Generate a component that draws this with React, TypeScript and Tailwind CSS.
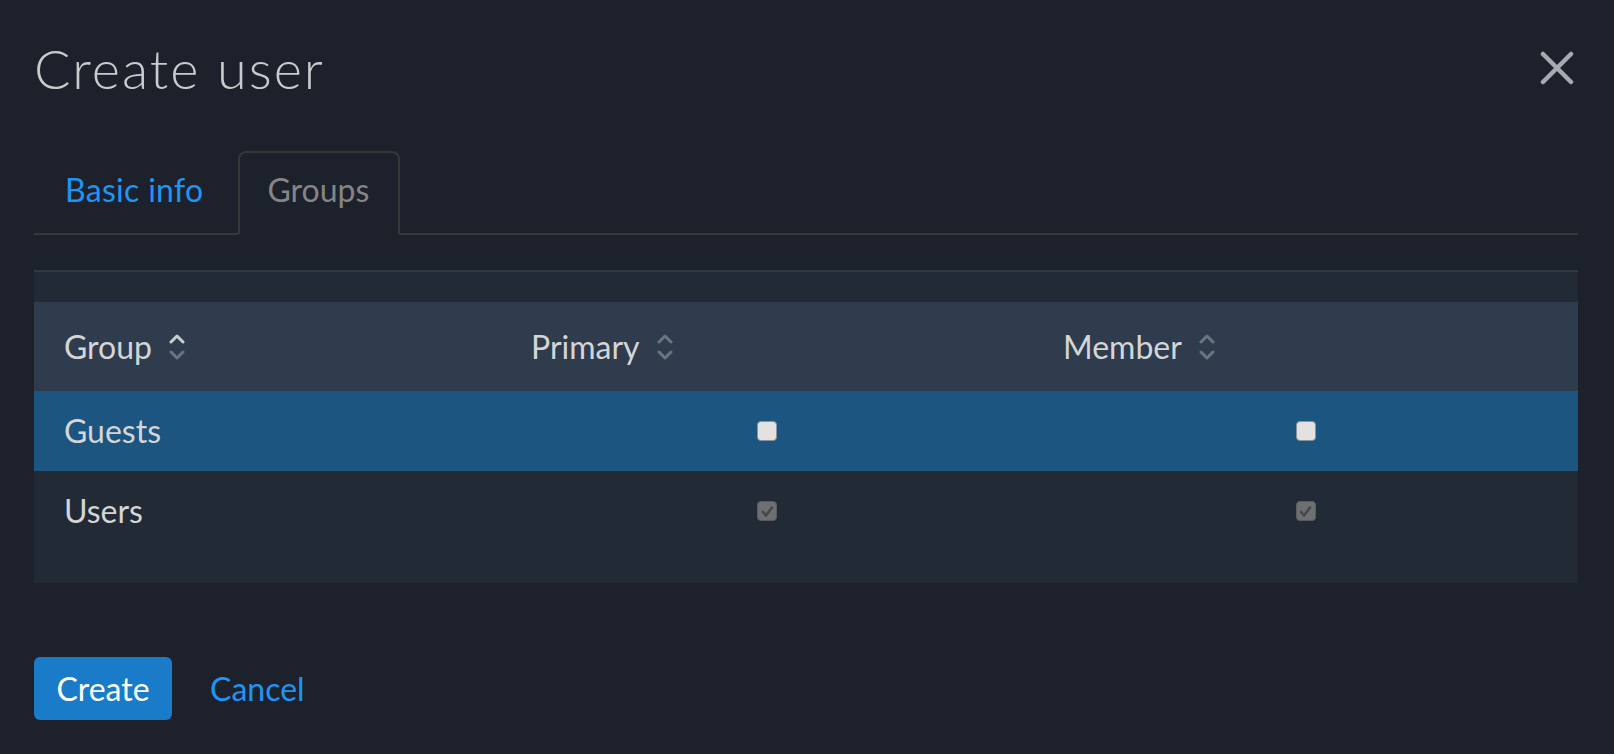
import React from "react";

const font = { fontFamily: '"Lato", "Open Sans", sans-serif' };

function SortIcon({ active }: { active?: boolean }) {
  return (
    <svg width="16" height="30" viewBox="0 0 16 30" className="ml-[17px]">
      <path d="M2 10 L8 4 L14 10" fill="none" stroke={active ? "#c9cdd2" : "#6a7583"} strokeWidth="3" strokeLinecap="round" strokeLinejoin="round" />
      <path d="M2 20 L8 26 L14 20" fill="none" stroke="#6a7583" strokeWidth="3" strokeLinecap="round" strokeLinejoin="round" />
    </svg>
  );
}

function Box({ checked }: { checked?: boolean }) {
  if (checked) {
    return (
      <div className="w-[20px] h-[20px] rounded-[4px] bg-[#6e6f71] border border-[#5a5c60] flex items-center justify-center">
        <svg width="13" height="13" viewBox="0 0 13 13">
          <path d="M2 7 L5 10.5 L11 2.5" fill="none" stroke="#45474b" strokeWidth="2.6" strokeLinecap="round" strokeLinejoin="round" />
        </svg>
      </div>
    );
  }
  return <div className="w-[20px] h-[20px] rounded-[4px] bg-[#e2e2e2] border border-[#8f9296]" />;
}

export default function App() {
  return (
    <div className="w-[1614px] h-[754px] bg-[#1c212b] pl-[34px] pr-[36px] pt-[42px] overflow-hidden" style={font}>
      <div className="flex items-center justify-between h-[54px]">
        <h1 className="text-[54px] leading-[54px] font-light text-[#c9cacc] tracking-[2px]">Create user</h1>
        <svg width="34" height="34" viewBox="0 0 34 34" className="mr-[4px] -mt-[2px]">
          <path d="M3 3 L31 31 M31 3 L3 31" stroke="#a7aab0" strokeWidth="4.5" strokeLinecap="round" />
        </svg>
      </div>

      <div className="mt-[55px] flex border-b-2 border-[#38383a]">
        <div className="pl-[29px] pr-[30px] pt-[15px] pb-[21px] border-2 border-transparent mb-[-2px] text-[32px] leading-[44px] text-[#1e95f5] tracking-[0.3px]">
          Basic info
        </div>
        <div className="ml-[3px] pl-[27px] pr-[29px] pt-[15px] pb-[21px] border-2 border-[#38383a] border-b-[#1c212b] rounded-t-[8px] mb-[-2px] text-[32px] leading-[44px] text-[#858585] bg-[#1c212b]">
          Groups
        </div>
      </div>

      <div className="mt-[35px] bg-[#222a35] border-t-2 border-[#303945] pt-[30px] pb-[32px]">
        <div className="grid grid-cols-[467px_532px_1fr] h-[89px] bg-[#2e3c4d] text-[32px] text-[#d4d5d6] items-center">
          <div className="pl-[30px] flex items-center">Group<SortIcon active /></div>
          <div className="pl-[30px] flex items-center">Primary<SortIcon /></div>
          <div className="pl-[30px] flex items-center">Member<SortIcon /></div>
        </div>
        <div className="grid grid-cols-[467px_532px_1fr] h-[80px] bg-[#1b5580] text-[32px] text-[#d4d5d6] items-center">
          <div className="pl-[30px]">Guests</div>
          <div className="flex justify-center"><Box /></div>
          <div className="flex justify-center"><Box /></div>
        </div>
        <div className="grid grid-cols-[467px_532px_1fr] h-[80px] text-[32px] text-[#d4d5d6] items-center">
          <div className="pl-[30px]">Users</div>
          <div className="flex justify-center"><Box checked /></div>
          <div className="flex justify-center"><Box checked /></div>
        </div>
      </div>

      <div className="mt-[74px] flex items-center">
        <button className="w-[138px] h-[63px] rounded-[6px] bg-[#1a7bc8] text-white text-[32px] leading-none">Create</button>
        <span className="ml-[38px] text-[32px] text-[#1e95f5]">Cancel</span>
      </div>
    </div>
  );
}
